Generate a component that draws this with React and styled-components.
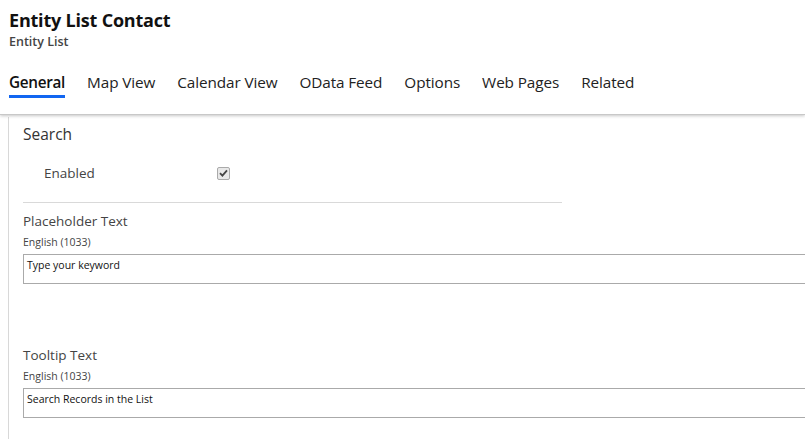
import React from 'react'
import styled, { createGlobalStyle } from 'styled-components'

const GlobalStyle = createGlobalStyle`
  html, body {
    margin: 0;
    padding: 0;
    background: #fff;
    font-family: "Open Sans", "Noto Sans", sans-serif;
    overflow: hidden;
  }
`

const tabs = ['General', 'Map View', 'Calendar View', 'OData Feed', 'Options', 'Web Pages', 'Related']

const App = () => {
  return (
    <Page>
      <GlobalStyle />
      <Header>
        <Title>Entity List Contact</Title>
        <Subtitle>Entity List</Subtitle>
        <TabBar>
          {tabs.map((t, i) => (
            <Tab key={t} active={i === 0}>{t}</Tab>
          ))}
        </TabBar>
      </Header>
      <Body>
        <Section>
          <SectionTitle>Search</SectionTitle>
          <CheckRow>
            <RowLabel>Enabled</RowLabel>
            <CheckBox>
              <svg width="9" height="8" viewBox="0 0 9 8">
                <path d="M1 4.2 L3.4 6.6 L8 1.4" fill="none" stroke="#444" strokeWidth="1.8" />
              </svg>
            </CheckBox>
          </CheckRow>
          <Divider />
          <Field>
            <FieldTitle>Placeholder Text</FieldTitle>
            <LangLabel>English (1033)</LangLabel>
            <TextBox>Type your keyword</TextBox>
          </Field>
          <Field gap="61px">
            <FieldTitle>Tooltip Text</FieldTitle>
            <LangLabel>English (1033)</LangLabel>
            <TextBox>Search Records in the List</TextBox>
          </Field>
        </Section>
      </Body>
    </Page>
  )
}

const Page = styled.div`
  width: 805px;
  height: 445px;
  display: flex;
  flex-direction: column;
  overflow: hidden;
`

const Header = styled.header`
  padding: 7px 0 0 9px;
  height: 107px;
  border-bottom: 1px solid #c8c8c8;
  box-shadow: 0 1px 3px rgba(0, 0, 0, 0.22);
  position: relative;
  z-index: 1;
  background: #fff;
`

const Title = styled.h1`
  margin: 0;
  font-size: 18px;
  font-weight: 700;
  color: #111;
  line-height: 26px;
  letter-spacing: -0.2px;
`

const Subtitle = styled.div`
  font-size: 12.5px;
  font-weight: 600;
  color: #444;
  line-height: 18px;
`

const TabBar = styled.nav`
  display: flex;
  gap: 22px;
  margin-top: 21px;
`

const Tab = styled.div`
  font-size: 15.3px;
  color: ${({ active }) => (active ? '#111' : '#222')};
  font-weight: ${({ active }) => (active ? 600 : 400)};
  line-height: 20px;
  padding-bottom: 3px;
  border-bottom: 3px solid ${({ active }) => (active ? '#1266f1' : 'transparent')};
  letter-spacing: ${({ active }) => (active ? '-0.3px' : '-0.1px')};
`

const Body = styled.main`
  flex: 1;
  padding: 2px 0 6px 8px;
  display: flex;
`

const Section = styled.section`
  flex: 1;
  border-left: 1px solid #d8d8d8;
  padding: 6px 0 0 14px;
`

const SectionTitle = styled.h2`
  margin: 0;
  font-size: 15.5px;
  font-weight: 400;
  color: #333;
  line-height: 22px;
`

const CheckRow = styled.div`
  display: flex;
  align-items: center;
  padding: 18px 0 0 21px;
  height: 20px;
`

const RowLabel = styled.span`
  font-size: 13.5px;
  color: #444;
  width: 173px;
`

const CheckBox = styled.span`
  width: 11px;
  height: 11px;
  border: 1px solid #aaa;
  border-radius: 2px;
  background: #e8e8e8;
  display: flex;
  align-items: center;
  justify-content: center;
`

const Divider = styled.hr`
  width: 539px;
  margin: 19px 0 0 0;
  border: 0;
  border-top: 1px solid #d9d9d9;
`

const Field = styled.div`
  margin-top: ${({ gap }) => gap || '8px'};
  display: flex;
  flex-direction: column;
`

const FieldTitle = styled.div`
  font-size: 13.5px;
  color: #444;
  line-height: 20px;
`

const LangLabel = styled.div`
  font-size: 10.5px;
  color: #444;
  line-height: 14px;
  margin-top: 4px;
`

const TextBox = styled.div`
  margin-top: 5px;
  height: 30px;
  border: 1px solid #aaa;
  border-right: 0;
  padding: 2px 3px;
  box-sizing: border-box;
  font-size: 10.5px;
  color: #111;
  line-height: 16px;
`

export default App
